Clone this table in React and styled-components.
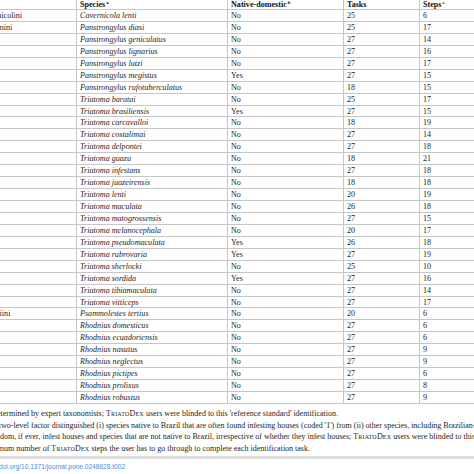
import React from 'react';
import styled, { createGlobalStyle } from 'styled-components';

const GlobalStyle = createGlobalStyle`
  html, body {
    margin: 0;
    padding: 0;
    background: #ffffff;
    overflow: hidden;
  }
  body {
    font-family: "Liberation Serif", "DejaVu Serif", serif;
    color: #1e1e1e;
  }
`;

const Page = styled.div`
  width: 474px;
  height: 474px;
  overflow: hidden;
`;

const Table = styled.div`
  margin-left: -25px;
  width: 522px;
`;

const Row = styled.div`
  display: grid;
  grid-template-columns: 101px 151px 116px 76px 78px;
  height: ${(p) => (p.$head ? '10px' : '11.95px')};
  box-sizing: border-box;
  border-bottom: 1px solid #c6c6c6;
  align-items: end;
`;

const Cell = styled.div`
  align-self: stretch;
  padding-left: 3px;
  border-left: ${(p) => (p.$first ? 'none' : '1px solid #c6c6c6')};
  font-size: 8.1px;
  line-height: ${(p) => (p.$head ? '10px' : '11px')};
  white-space: nowrap;
  overflow: hidden;
  font-weight: ${(p) => (p.$head ? 700 : 400)};
  font-style: ${(p) => (p.$italic ? 'italic' : 'normal')};
  color: ${(p) => (p.$head ? '#111' : '#1e1e1e')};
`;

const Sup = styled.sup`
  font-size: 5px;
  line-height: 0;
  vertical-align: 3px;
  margin-left: 1px;
`;

const Notes = styled.div`
  margin-top: 4px;
  font-size: 8px;
  line-height: 11.7px;
`;

const NoteLine = styled.div`
  white-space: nowrap;
  margin-left: ${(p) => p.$shift}px;
`;

const SmallCaps = styled.span`
  font-variant: small-caps;
  letter-spacing: 0.2px;
`;

const Bar = styled.div`
  margin-top: 1px;
  height: 3px;
  background: #dcdcdc;
`;

const DoiLink = styled.a`
  display: block;
  margin-top: 4px;
  margin-left: -1px;
  font-family: "Liberation Sans", Arial, sans-serif;
  font-size: 6.6px;
  line-height: 8px;
  color: #4a8fdb;
  text-decoration: none;
`;

const rows = [
  ['Cavernicolini', 'Cavernicola lenti', 'No', '25', '6'],
  ['Triatomini', 'Panstrongylus diasi', 'No', '25', '17'],
  ['', 'Panstrongylus geniculatus', 'No', '27', '14'],
  ['', 'Panstrongylus lignarius', 'No', '27', '16'],
  ['', 'Panstrongylus lutzi', 'No', '27', '17'],
  ['', 'Panstrongylus megistus', 'Yes', '27', '15'],
  ['', 'Panstrongylus rufotuberculatus', 'No', '18', '15'],
  ['', 'Triatoma baratai', 'No', '25', '17'],
  ['', 'Triatoma brasiliensis', 'Yes', '27', '15'],
  ['', 'Triatoma carcavalloi', 'No', '18', '19'],
  ['', 'Triatoma costalimai', 'No', '27', '14'],
  ['', 'Triatoma delpontei', 'No', '27', '18'],
  ['', 'Triatoma guazu', 'No', '18', '21'],
  ['', 'Triatoma infestans', 'No', '27', '18'],
  ['', 'Triatoma juazeirensis', 'No', '18', '18'],
  ['', 'Triatoma lenti', 'No', '20', '19'],
  ['', 'Triatoma maculata', 'No', '26', '18'],
  ['', 'Triatoma matogrossensis', 'No', '27', '15'],
  ['', 'Triatoma melanocephala', 'No', '20', '17'],
  ['', 'Triatoma pseudomaculata', 'Yes', '26', '18'],
  ['', 'Triatoma rubrovaria', 'Yes', '27', '19'],
  ['', 'Triatoma sherlocki', 'No', '25', '10'],
  ['', 'Triatoma sordida', 'Yes', '27', '16'],
  ['', 'Triatoma tibiamaculata', 'No', '27', '14'],
  ['', 'Triatoma vitticeps', 'No', '27', '17'],
  ['Rhodniini', 'Psammolestes tertius', 'No', '20', '6'],
  ['', 'Rhodnius domesticus', 'No', '27', '6'],
  ['', 'Rhodnius ecuadoriensis', 'No', '27', '6'],
  ['', 'Rhodnius nasutus', 'No', '27', '9'],
  ['', 'Rhodnius neglectus', 'No', '27', '9'],
  ['', 'Rhodnius pictipes', 'No', '27', '6'],
  ['', 'Rhodnius prolixus', 'No', '27', '8'],
  ['', 'Rhodnius robustus', 'No', '27', '9'],
];

const Dex = () => <SmallCaps>TriatoDex</SmallCaps>;

export default function App() {
  return (
    <Page>
      <GlobalStyle />
      <Table>
        <Row $head>
          <Cell $first $head>Tribe</Cell>
          <Cell $head>Species<Sup>a</Sup></Cell>
          <Cell $head>Native-domestic<Sup>b</Sup></Cell>
          <Cell $head>Tasks</Cell>
          <Cell $head>Steps<Sup>c</Sup></Cell>
        </Row>
        {rows.map((r) => (
          <Row key={r[1]}>
            <Cell $first>{r[0]}</Cell>
            <Cell $italic>{r[1]}</Cell>
            <Cell>{r[2]}</Cell>
            <Cell>{r[3]}</Cell>
            <Cell>{r[4]}</Cell>
          </Row>
        ))}
      </Table>
      <Notes>
        <NoteLine $shift={-12}>
          <Sup>a</Sup>Determined by expert taxonomists; <Dex /> users were blinded to this 'reference standard' identification.
        </NoteLine>
        <NoteLine $shift={-12}>
          <Sup>b</Sup>A two-level factor distinguished (i) species native to Brazil that are often found infesting houses (coded '1') from (ii) other species, including Brazilian-native species that
        </NoteLine>
        <NoteLine $shift={-9}>
          seldom, if ever, infest houses and species that are not native to Brazil, irrespective of whether they infest houses; <Dex /> users were blinded to this classification.
        </NoteLine>
        <NoteLine $shift={-21}>
          <Sup>c</Sup>Minimum number of <Dex /> steps the user has to go through to complete each identification task.
        </NoteLine>
      </Notes>
      <Bar />
      <DoiLink href="#">doi.org/10.1371/journal.pone.0248628.t002</DoiLink>
    </Page>
  );
}
